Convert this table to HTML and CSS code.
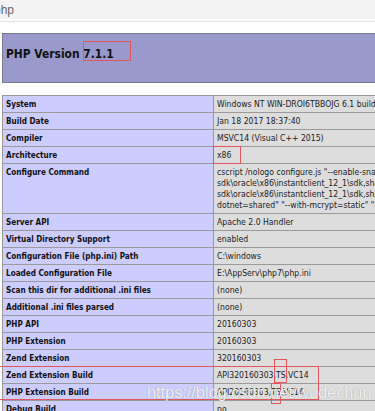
FILE: index.html
```html
<!DOCTYPE html>
<html lang="en">
<head>
    <meta charset="UTF-8">
    <title>phpinfo()</title>
    <link rel="stylesheet" href="styles.css">
</head>
<body>
    <div class="address-bar"><span class="address-text">php</span></div>

    <div class="page">
        <div class="center">
            <div class="version-box">
                <h1 class="version-title">PHP Version 7.1.1</h1>
            </div>

            <table class="info">
                <tr><td class="e">System</td><td class="v">Windows NT WIN-DROI6TBBOJG 6.1 build 7601 (Windows 7 Business Edition Service Pack 1) i586</td></tr>
                <tr><td class="e">Build Date</td><td class="v">Jan 18 2017 18:37:40</td></tr>
                <tr><td class="e">Compiler</td><td class="v">MSVC14 (Visual C++ 2015)</td></tr>
                <tr><td class="e">Architecture</td><td class="v">x86</td></tr>
                <tr><td class="e">Configure Command</td><td class="v">cscript /nologo configure.js "--enable-snapshot-build" "--enable-debug-pack" "--with-pdo-oci=c:\php-<br>sdk\oracle\x86\instantclient_12_1\sdk,shared" "--with-oci8-12c=c:\php-<br>sdk\oracle\x86\instantclient_12_1\sdk,shared" "--enable-object-out-dir=../obj/" "--enable-com-<br>dotnet=shared" "--with-mcrypt=static" "--without-analyzer" "--with-pgo"</td></tr>
                <tr><td class="e">Server API</td><td class="v">Apache 2.0 Handler</td></tr>
                <tr><td class="e">Virtual Directory Support</td><td class="v">enabled</td></tr>
                <tr><td class="e">Configuration File (php.ini) Path</td><td class="v">C:\windows</td></tr>
                <tr><td class="e">Loaded Configuration File</td><td class="v">E:\AppServ\php7\php.ini</td></tr>
                <tr><td class="e">Scan this dir for additional .ini files</td><td class="v">(none)</td></tr>
                <tr><td class="e">Additional .ini files parsed</td><td class="v">(none)</td></tr>
                <tr><td class="e">PHP API</td><td class="v">20160303</td></tr>
                <tr><td class="e">PHP Extension</td><td class="v">20160303</td></tr>
                <tr><td class="e">Zend Extension</td><td class="v">320160303</td></tr>
                <tr><td class="e">Zend Extension Build</td><td class="v">API320160303,TS,VC14</td></tr>
                <tr><td class="e">PHP Extension Build</td><td class="v">API20160303,TS,VC14</td></tr>
                <tr><td class="e">Debug Build</td><td class="v">no</td></tr>
            </table>
        </div>
    </div>

    <!-- anotaciones en rojo -->
    <div class="mark mark-version"></div>
    <div class="mark mark-arch"></div>
    <div class="mark mark-build"></div>
    <div class="mark mark-ts1"></div>
    <div class="mark mark-ts2"></div>

    <div class="watermark">https://blog.csdn.net/wudechun</div>
</body>
</html>
```

FILE: styles.css
```css
* {
    margin: 0;
    padding: 0;
    box-sizing: border-box;
}

body {
    position: relative;
    background: #fff;
    color: #222;
    font-family: "DejaVu Sans Condensed", "DejaVu Sans", sans-serif;
    overflow: hidden;
    width: 375px;
    height: 411px;
}

.address-bar {
    height: 21px;
    background: #f3f3f3;
    border-bottom: 2px solid #fff;
    box-shadow: 0 1px 0 #e2e2e2;
    overflow: hidden;
}

.address-text {
    display: block;
    margin-left: -6px;
    padding-top: 3px;
    font-family: "Liberation Sans", sans-serif;
    font-size: 12px;
    color: #666;
}

.page {
    padding: 12px 0 0 2px;
}

.center {
    width: 654px;
}

.version-box {
    height: 50px;
    background: #9999cc;
    border: 1px solid #7a7a8c;
    padding: 13px 3px 0;
    margin-bottom: 12px;
}

.version-title {
    font-size: 11.9px;
    line-height: 14px;
    font-weight: bold;
    color: #111;
}

.info {
    width: 654px;
    border-collapse: collapse;
}

.info td {
    border: 1px solid #9a9a9a;
    padding: 3px 3px 2px;
    line-height: 11px;
    vertical-align: baseline;
    white-space: nowrap;
}

.e {
    width: 211px;
    background: #ccccff;
    font-weight: bold;
    font-size: 8.1px;
    color: #111;
}

.v {
    background: #dddddd;
    font-size: 8.6px;
    color: #222;
}

.mark {
    position: absolute;
    border: 1px solid #e2565d;
}

.mark-version {
    left: 83px;
    top: 41px;
    width: 48px;
    height: 20px;
}

.mark-arch {
    left: 213px;
    top: 146px;
    width: 28px;
    height: 18px;
}

.mark-build {
    left: -1px;
    top: 366px;
    width: 320px;
    height: 34px;
}

.mark-ts1 {
    left: 274px;
    top: 359px;
    width: 13px;
    height: 24px;
}

.mark-ts2 {
    left: 271px;
    top: 383px;
    width: 10px;
    height: 21px;
}

.watermark {
    position: absolute;
    left: 147px;
    top: 383px;
    font-family: "Liberation Sans", sans-serif;
    font-size: 16.3px;
    line-height: 18px;
    color: rgba(255, 255, 255, 0.88);
    text-shadow: 0 0 1px rgba(90, 90, 90, 0.6);
    white-space: nowrap;
}
```
